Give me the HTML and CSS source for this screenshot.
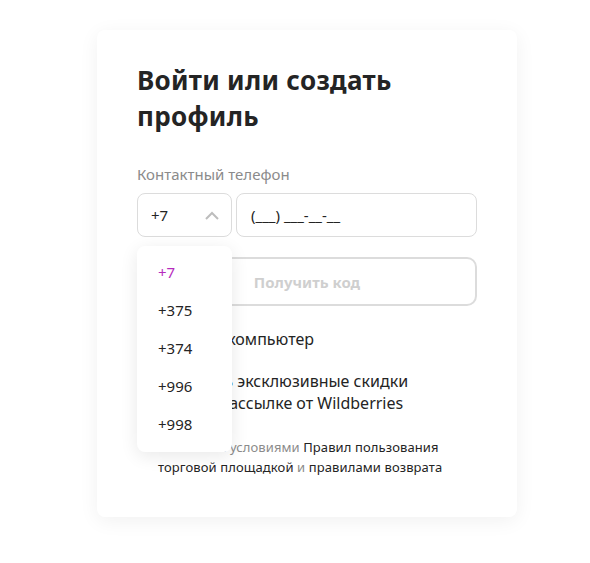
FILE: index.html
```html
<!DOCTYPE html>
<html lang="ru">
<head>
  <meta charset="UTF-8">
  <meta name="viewport" content="width=device-width, initial-scale=1.0">
  <title>Войти или создать профиль</title>
  <link rel="stylesheet" href="styles.css">
</head>
<body>
  <div class="login">
    <h1 class="title">Войти или создать профиль</h1>

    <div class="label">Контактный телефон</div>
    <div class="phone-row">
      <div class="code-select">
        <div class="code-current">
          <span>+7</span>
          <svg class="chevron" width="14" height="9" viewBox="0 0 14 9">
            <path d="M1 8 L7 2 L13 8" fill="none" stroke="#bdbdbd" stroke-width="2"/>
          </svg>
        </div>
        <!-- dropdown list -->
        <ul class="code-list">
          <li class="active">+7</li>
          <li>+375</li>
          <li>+374</li>
          <li>+996</li>
          <li>+998</li>
        </ul>
      </div>
      <div class="phone-input">(___) ___-__-__</div>
    </div>

    <button class="get-code">Получить код</button>

    <label class="check">
      <span class="box"></span>
      <span class="check-text">Это мой компьютер</span>
    </label>
    <label class="check">
      <span class="box"></span>
      <span class="check-text">Получать эксклюзивные скидки в&nbsp;Email&#8209;рассылке от Wildberries</span>
    </label>

    <div class="terms">
      <span class="muted">Согласен с условиями</span> Правил пользования торговой площадкой <span class="muted">и</span> правилами возврата
    </div>
  </div>
</body>
</html>
```

FILE: styles.css
```css
/* General */
body {
  margin: 0;
  padding: 30px 0 46px;
  background-color: #fff;
  font-family: "Noto Sans", "Open Sans", Arial, sans-serif;
  color: #242424;
}

.login {
  width: 420px;
  margin-left: 97px;
  box-sizing: border-box;
  padding: 32px 40px 40px;
  background-color: #fff;
  border-radius: 8px;
  box-shadow: 0 4px 20px rgba(0, 0, 0, 0.06);
}

.title {
  margin: 0 0 30px;
  font-size: 26px;
  line-height: 36px;
  font-weight: 700;
  letter-spacing: 0.3px;
  color: #242424;
}

.label {
  font-size: 15px;
  line-height: 20px;
  color: #8b8b8b;
  margin-bottom: 9px;
}

/* Phone row */
.phone-row {
  display: flex;
  gap: 4px;
}

.code-select {
  position: relative;
  width: 95px;
  flex: none;
}

.code-current,
.phone-input {
  height: 44px;
  box-sizing: border-box;
  border: 1px solid #dcdcdc;
  border-radius: 8px;
  display: flex;
  align-items: center;
  font-size: 15px;
}

.code-current {
  justify-content: space-between;
  padding: 0 12px 0 13px;
}

.phone-input {
  flex: 1;
  padding-left: 14px;
  color: #242424;
}

.code-list {
  position: absolute;
  top: 53px;
  left: 0;
  width: 95px;
  margin: 0;
  padding: 7px 0 9px;
  list-style: none;
  background-color: #fff;
  border-radius: 8px;
  box-shadow: 0 4px 18px rgba(0, 0, 0, 0.09);
  z-index: 2;
}

.code-list li {
  height: 38px;
  line-height: 38px;
  padding-left: 21px;
  font-size: 15px;
  color: #242424;
}

.code-list li.active {
  color: #b62bbd;
}

/* Button */
.get-code {
  display: block;
  width: 100%;
  height: 49px;
  margin-top: 20px;
  background-color: #fff;
  border: 2px solid #dcdcdc;
  border-radius: 10px;
  font-family: inherit;
  font-size: 15px;
  font-weight: 700;
  color: #cfcfcf;
}

/* Checkboxes */
.check {
  display: flex;
  gap: 7px;
  font-size: 16px;
  line-height: 22px;
  margin-top: 22px;
}

.check + .check {
  margin-top: 20px;
}

.check-text {
  max-width: 290px;
}

.box {
  flex: none;
  width: 14px;
  height: 14px;
  margin-top: 4px;
  border: 1px solid #ccc;
  border-radius: 3px;
}

.terms {
  margin-top: 23px;
  padding-left: 21px;
  font-size: 13px;
  line-height: 20px;
  letter-spacing: 0.1px;
  color: #242424;
}

.muted {
  color: #8b8b8b;
}
```
